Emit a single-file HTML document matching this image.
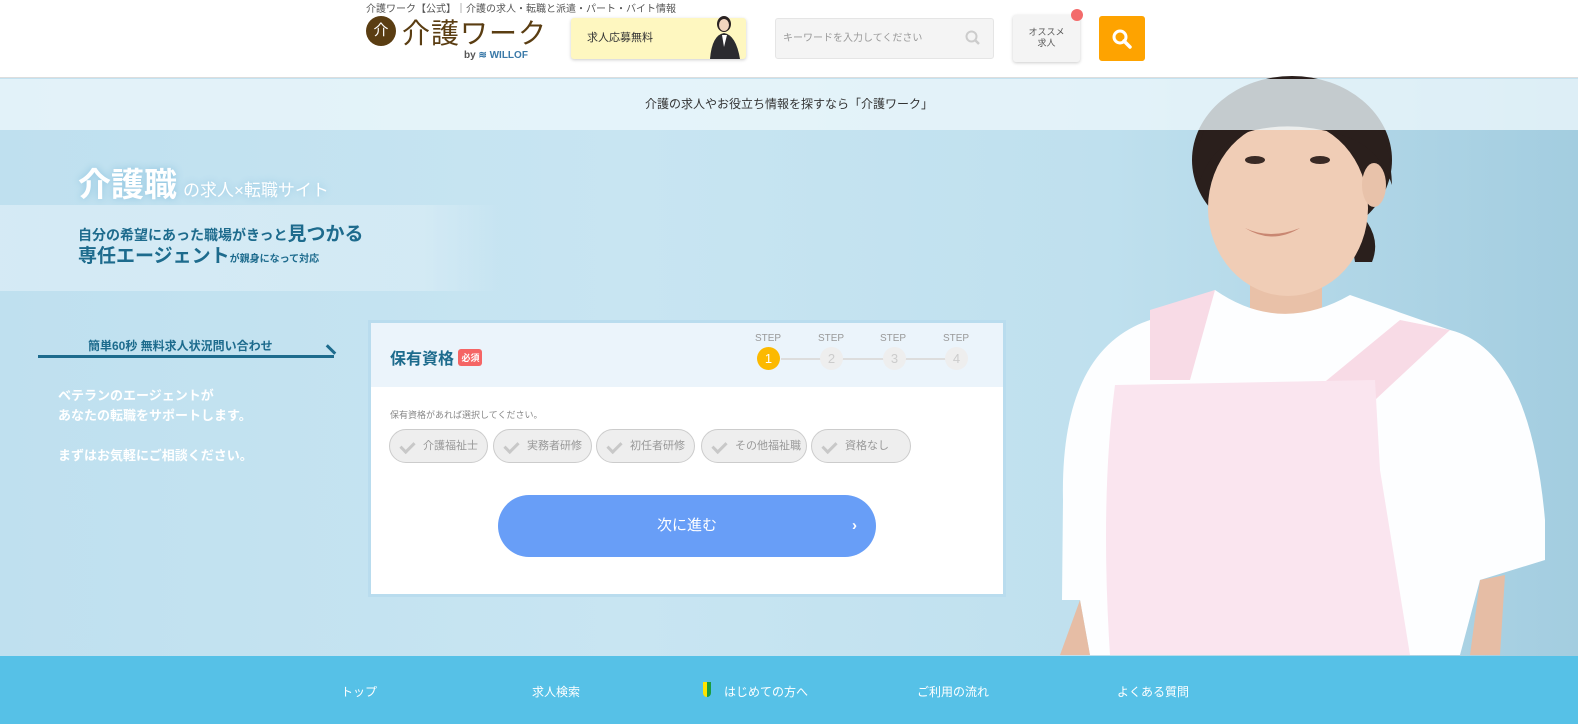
<!DOCTYPE html>
<html><head><meta charset="utf-8">
<style>
*{margin:0;padding:0;box-sizing:border-box}
body{width:1578px;height:724px;overflow:hidden;position:relative;font-family:"Liberation Sans","Noto Sans CJK JP",sans-serif;background:#c4e2f0}
.a{position:absolute}
#hdr{left:0;top:0;width:1578px;height:78px;background:#fff;border-bottom:1px solid #ddd}
#hero{left:0;top:79px;width:1578px;height:578px;background:linear-gradient(90deg,#bfe0ef 0%,#c8e5f2 40%,#bfe0ee 70%,#a3cde0 100%)}
#band{left:0;top:79px;width:1578px;height:51px;background:rgba(235,246,251,.8);font-size:12px;color:#333;text-align:center;line-height:51px}
#foot{left:0;top:656px;width:1578px;height:68px;background:#56c1e7;color:#fff;font-size:12px}
#foot span{position:absolute;top:27px}
.card{left:368px;top:320px;width:638px;height:277px;background:#fff;border:3px solid #b9dcee}
.chip{position:absolute;top:106px;height:34px;border:1px solid #ccc;border-radius:17px;background:#eee;color:#999;font-size:11px;line-height:32px;padding-left:33px}
.chip:before{content:"";position:absolute;left:13px;top:9px;width:6px;height:11px;border-right:3px solid #c8c8c8;border-bottom:3px solid #c8c8c8;transform:rotate(45deg)}
.st{position:absolute;top:10px;font-size:10px;color:#999;width:40px;text-align:center}
.dot{position:absolute;top:24px;width:23px;height:23px;border-radius:50%;background:#eee;color:#ccc;font-size:13px;text-align:center;line-height:23px}
</style></head><body>
<div class="a" id="hdr"></div>
<div class="a" style="left:366px;top:0;font-size:10px;color:#555">介護ワーク【公式】｜介護の求人・転職と派遣・パート・バイト情報</div>
<div class="a" style="left:366px;top:16px;width:30px;height:30px;border-radius:50%;background:#5a3d12;color:#fff;font-size:15px;text-align:center;line-height:30px">介</div>
<div class="a" style="left:402px;top:12px;font-size:28px;color:#5a3d12;letter-spacing:1px">介護ワーク</div>
<div class="a" style="left:464px;top:50px;font-size:10px;color:#555;font-weight:bold">by <span style="color:#3a79a8">≋ WILLOF</span></div>
<div class="a" style="left:571px;top:18px;width:175px;height:41px;background:#fef7c0;border-radius:3px;box-shadow:0 1px 3px #ccc;font-size:11px;color:#333;line-height:41px;padding-left:16px">求人応募無料</div>
<svg class="a" style="left:700px;top:13px" width="44" height="46"><ellipse cx="24" cy="11" rx="7" ry="8" fill="#2a2222"/><ellipse cx="24" cy="12" rx="5" ry="6" fill="#f1d4be"/><path d="M10 46 Q12 22 24 20 Q36 22 40 46Z" fill="#2b2b2f"/><path d="M22 22 L24 34 L27 22Z" fill="#fff"/></svg>
<div class="a" style="left:775px;top:18px;width:219px;height:41px;background:#f4f4f4;border:1px solid #e5e5e5;border-radius:3px;font-size:10px;color:#999;line-height:40px;padding-left:7px">キーワードを入力してください</div>
<svg class="a" style="left:965px;top:30px" width="16" height="16"><circle cx="6.5" cy="6.5" r="5" fill="none" stroke="#ccc" stroke-width="2"/><path d="M10 10 L14 14" stroke="#ccc" stroke-width="2.5"/></svg>
<div class="a" style="left:1013px;top:15px;width:67px;height:47px;background:#f4f4f4;border-radius:3px;box-shadow:0 1px 3px #ccc;font-size:9px;color:#555;text-align:center;padding-top:12px;line-height:11px">オススメ<br>求人</div>
<div class="a" style="left:1071px;top:9px;width:12px;height:12px;border-radius:50%;background:#f36b6b"></div>
<div class="a" style="left:1099px;top:16px;width:46px;height:45px;background:#fea300;border-radius:3px"></div>
<svg class="a" style="left:1111px;top:28px" width="22" height="22"><circle cx="9" cy="9" r="6" fill="none" stroke="#fff" stroke-width="3"/><path d="M13 13 L19 19" stroke="#fff" stroke-width="3.5" stroke-linecap="round"/></svg>

<div class="a" id="hero"></div>
<svg class="a" style="left:0;top:0" width="1578" height="724">
<path d="M1345 200 Q1385 230 1372 262 L1355 262Z" fill="#2a1f1c"/>
<ellipse cx="1292" cy="160" rx="100" ry="84" fill="#2a1f1c"/>
<rect x="1250" y="260" width="72" height="70" fill="#e9c1a8"/>
<ellipse cx="1288" cy="208" rx="80" ry="88" fill="#f0cdb6"/>
<path d="M1196 175 Q1198 80 1292 78 Q1388 80 1392 185 Q1380 150 1350 138 Q1300 120 1255 130 Q1215 140 1200 180Z" fill="#2a1f1c"/>
<ellipse cx="1374" cy="185" rx="12" ry="22" fill="#e8c2aa"/>
<ellipse cx="1255" cy="160" rx="10" ry="4" fill="#3a2a25"/><ellipse cx="1320" cy="160" rx="10" ry="4" fill="#3a2a25"/>
<path d="M1245 228 Q1270 240 1300 228 Q1272 245 1245 228Z" fill="#c98772"/>
<path d="M1063 500 Q1060 350 1150 320 L1215 290 Q1280 335 1350 295 L1450 330 Q1530 350 1545 520 L1545 560 L1480 580 L1460 655 L1090 655 L1080 600 L1062 600Z" fill="#fdfeff"/>
<path d="M1080 600 L1060 655 L1090 655Z" fill="#e6bda5"/>
<path d="M1480 580 L1470 655 L1500 655 L1505 575Z" fill="#e6bda5"/>
<path d="M1150 310 L1215 290 L1190 380 L1150 380Z" fill="#f8dbe6"/>
<path d="M1315 390 L1400 320 L1450 330 L1375 400Z" fill="#f8dbe6"/>
<path d="M1115 385 L1375 380 L1380 470 L1410 655 L1110 655 Q1100 500 1115 385Z" fill="#fae5ef"/>
</svg>
<div class="a" id="band">介護の求人やお役立ち情報を探すなら「介護ワーク」</div>

<div class="a" style="left:78px;top:158px;font-size:33px;font-weight:bold;color:#fff;text-shadow:0 0 8px #8cc3df">介護職<span style="font-size:17px;font-weight:normal;margin-left:6px">の求人×転職サイト</span></div>
<div class="a" style="left:0;top:205px;width:500px;height:86px;background:linear-gradient(90deg,rgba(220,238,247,.75),rgba(220,238,247,.6) 85%,rgba(220,238,247,0))"></div>
<div class="a" style="left:78px;top:224px;font-size:14px;font-weight:bold;color:#1d6b8d;line-height:22px">自分の希望にあった職場がきっと<span style="font-size:19px">見つかる</span><br><span style="font-size:19px">専任エージェント</span><span style="font-size:10px">が親身になって対応</span></div>
<div class="a" style="left:88px;top:337px;font-size:12px;font-weight:bold;color:#1d6b8d">簡単60秒 無料求人状況問い合わせ</div>
<div class="a" style="left:38px;top:355px;width:296px;height:3px;background:#1d6b8d"></div>
<div class="a" style="left:325px;top:348px;width:12px;height:3px;background:#1d6b8d;transform:rotate(45deg)"></div>
<div class="a" style="left:58px;top:386px;font-size:13px;font-weight:bold;color:#fff;line-height:20px">ベテランのエージェントが<br>あなたの転職をサポートします。<br><br>まずはお気軽にご相談ください。</div>

<div class="a card">
 <div class="a" style="left:0;top:0;width:632px;height:64px;background:#ebf4fb"></div>
 <div class="a" style="left:19px;top:22px;font-size:16px;font-weight:bold;color:#1d6b8d">保有資格 <span style="display:inline-block;background:#f56565;color:#fff;font-size:9px;border-radius:3px;padding:2px 3px;vertical-align:3px">必須</span></div>
 <div class="a" style="left:410px;top:35px;width:180px;height:2px;background:#ddd"></div>
 <div class="st" style="left:377px">STEP</div><div class="st" style="left:440px">STEP</div><div class="st" style="left:502px">STEP</div><div class="st" style="left:565px">STEP</div>
 <div class="dot" style="left:386px;background:#fcb900;color:#fff">1</div><div class="dot" style="left:449px">2</div><div class="dot" style="left:512px">3</div><div class="dot" style="left:574px">4</div>
 <div class="a" style="left:19px;top:85px;font-size:9px;color:#888">保有資格があれば選択してください。</div>
 <div class="chip" style="left:18px;width:99px">介護福祉士</div>
 <div class="chip" style="left:122px;width:99px">実務者研修</div>
 <div class="chip" style="left:225px;width:99px">初任者研修</div>
 <div class="chip" style="left:330px;width:106px">その他福祉職</div>
 <div class="chip" style="left:440px;width:100px">資格なし</div>
 <div class="a" style="left:127px;top:172px;width:378px;height:62px;border-radius:31px;background:#689ef7;color:#fff;font-size:15px;text-align:center;line-height:62px">次に進む<span style="position:absolute;right:19px;font-weight:bold">›</span></div>
</div>

<div class="a" id="foot">
<span style="left:341px">トップ</span><span style="left:532px">求人検索</span>
<span style="left:703px;top:26px;width:8px;height:15px;background:linear-gradient(90deg,#ffe400 50%,#1a9c3e 50%);border-radius:0 0 4px 4px"></span>
<span style="left:724px">はじめての方へ</span><span style="left:917px">ご利用の流れ</span><span style="left:1117px">よくある質問</span>
</div>
</body></html>
